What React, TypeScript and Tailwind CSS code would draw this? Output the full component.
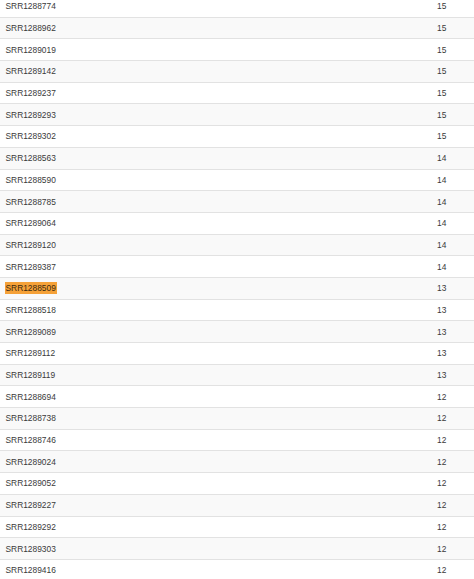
const rows: [string, number][] = [
  ["SRR1288774", 15],
  ["SRR1288962", 15],
  ["SRR1289019", 15],
  ["SRR1289142", 15],
  ["SRR1289237", 15],
  ["SRR1289293", 15],
  ["SRR1289302", 15],
  ["SRR1288563", 14],
  ["SRR1288590", 14],
  ["SRR1288785", 14],
  ["SRR1289064", 14],
  ["SRR1289120", 14],
  ["SRR1289387", 14],
  ["SRR1288509", 13],
  ["SRR1288518", 13],
  ["SRR1289089", 13],
  ["SRR1289112", 13],
  ["SRR1289119", 13],
  ["SRR1288694", 12],
  ["SRR1288738", 12],
  ["SRR1288746", 12],
  ["SRR1289024", 12],
  ["SRR1289052", 12],
  ["SRR1289227", 12],
  ["SRR1289292", 12],
  ["SRR1289303", 12],
  ["SRR1289416", 12],
];

const highlighted = "SRR1288509";

export default function App() {
  return (
    <div className="h-[579px] w-[474px] overflow-hidden bg-white">
      <div
        className="-mt-[5px] flex flex-col text-[8.4px] leading-[12px] text-[#3a3a3a]"
        style={{ fontFamily: '"Liberation Sans", Arial, sans-serif' }}
      >
        {rows.map(([id, count], i) => (
          <div
            key={id}
            className={
              "flex h-[21.7px] items-center border-t border-[#e2e2e2] " +
              (i % 2 === 1 ? "bg-[#f9f9f9]" : "bg-white")
            }
          >
            <div className="w-[433px] pl-[5.5px]">
              {id === highlighted ? (
                <span className="-ml-[1px] bg-[#f5a138] px-[1px] py-[1px] text-[#3a2a10]">{id}</span>
              ) : (
                id
              )}
            </div>
            <div className="pl-[4px]">{count}</div>
          </div>
        ))}
      </div>
    </div>
  );
}
